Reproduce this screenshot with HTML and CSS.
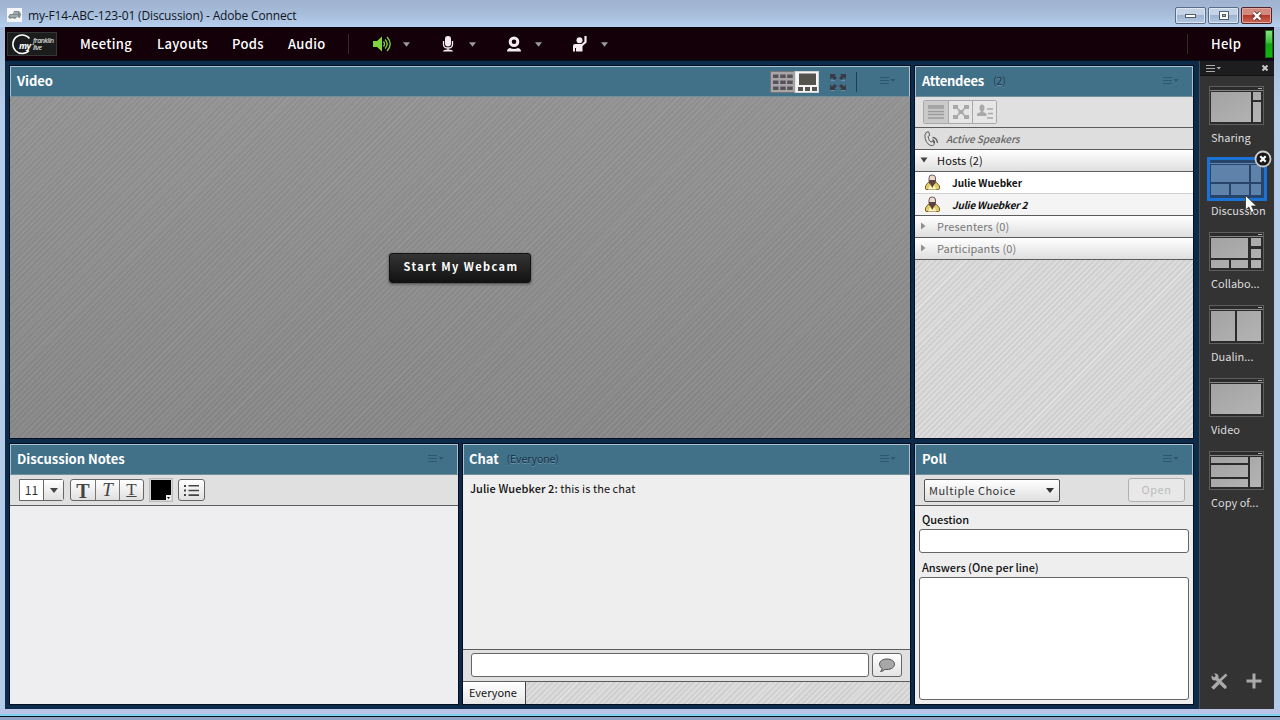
FILE: index.html
```html
<!DOCTYPE html>
<html lang="en">
<head>
    <meta charset="UTF-8">
    <meta name="viewport" content="width=device-width, initial-scale=1.0">
    <title>my-F14-ABC-123-01 (Discussion) - Adobe Connect</title>
    <link rel="stylesheet" href="styles.css">
</head>
<body>
    <!-- Shared icons -->
    <svg class="defs" width="0" height="0">
        <symbol id="pod-menu" viewBox="0 0 16 10">
            <path d="M0 1.500h9M0 4.500h9M0 7.500h9" stroke="currentColor" fill="none"/>
            <path d="M10.500 3h5l-2.500 3z" fill="currentColor"/>
        </symbol>
        <symbol id="caret" viewBox="0 0 8 5">
            <path d="M0 0h8L4 5z" fill="currentColor"/>
        </symbol>
        <symbol id="host" viewBox="0 0 17 17">
            <path d="M1.500 15v-3l2.500-3.500h8.500l3 3.500v3l-1 .5h-12.500z" fill="#e3cc6a" stroke="#7d6426"/>
            <path d="M4 15.500l2-4 2.300 2 2.200-2 2 4z" fill="#fff6c4"/>
            <path d="M6 8.500l2.300 5.500 2.200-5.500z" fill="#4f3433"/>
            <rect x="5" y="1" width="6.500" height="9" rx="3" fill="#ecdcd2" stroke="#6b5a56"/>
            <path d="M5 6h6.500v3l-2 2h-2.500l-2-2z" fill="#5e4240"/>
        </symbol>
        <symbol id="frame" viewBox="0 0 56 40">
            <rect x=".5" y=".5" width="54" height="38" fill="#2b2b2b" stroke="#5e5e5e"/>
            <path d="M1 4.500h53" stroke="#858585"/>
            <path d="M49 2.500h4" stroke="#aaa"/>
        </symbol>
        <linearGradient id="block" x1="0" y1="0" x2="1" y2="1">
            <stop offset="0" stop-color="#a2a2a2"/>
            <stop offset="1" stop-color="#b4b4b4"/>
        </linearGradient>
    </svg>

    <div class="window">
        <div class="titlebar">
            <svg class="app-icon" width="15" height="14" viewBox="0 0 15 14">
                <rect width="15" height="14" fill="#f4f6f8"/>
                <path d="M1 9l2-3h3l1-3h5l2 3-1 4-3-1-2 2-3-1-2 1z" fill="#7e8a8b"/>
                <path d="M3 8h8M7 5h4" stroke="#c5cccb"/>
            </svg>
            <span class="window-title">my-F14-ABC-123-01 (Discussion) - Adobe Connect</span>
            <div class="window-btns">
                <div class="win-btn">
                    <svg width="12" height="6" viewBox="0 0 12 6"><rect x=".5" y="1.500" width="10" height="3" fill="#fff" stroke="#505c70"/></svg>
                </div>
                <div class="win-btn">
                    <svg width="12" height="10" viewBox="0 0 12 10"><rect x="1.500" y=".5" width="9" height="8" fill="#fff" stroke="#505c70"/><rect x="4.500" y="3.500" width="3" height="2" fill="#9fb3cf" stroke="#505c70"/></svg>
                </div>
                <div class="win-btn close">
                    <svg width="12" height="10" viewBox="0 0 12 10"><path d="M2.500 1.500l7 7M9.500 1.500l-7 7" stroke="#6c3330" stroke-width="4"/><path d="M2.500 1.500l7 7M9.500 1.500l-7 7" stroke="#fff" stroke-width="2.400"/></svg>
                </div>
            </div>
        </div>

        <div class="app">
            <div class="menubar">
                <div class="logo">
                    <svg class="logo-ring" width="22" height="22" viewBox="0 0 22 22"><path d="M18.500 5.500A9.300 9.300 0 1 0 18 17.500" fill="none" stroke="#fff" stroke-width="1.500"/></svg>
                    <b class="logo-my">my</b>
                    <span class="logo-name">franklin<br>live</span>
                </div>
                <span class="menu-item meeting">Meeting</span>
                <span class="menu-item layouts">Layouts</span>
                <span class="menu-item pods-menu">Pods</span>
                <span class="menu-item audio">Audio</span>
                <div class="separator"></div>
                <div class="tools">
                    <div class="tool">
                        <svg width="20" height="18" viewBox="0 0 20 18">
                            <path d="M1 6h4l5-4.500v15L5 12H1z" fill="#7ed43c"/>
                            <path d="M11.500 6.500q2 2.500 0 5M13 4.500q4.500 4.500 0 9M15 2q6.500 7 0 14" fill="none" stroke="#7ed43c" stroke-width="1.300"/>
                        </svg>
                        <svg class="tool-caret" width="7" height="5"><use href="#caret"/></svg>
                    </div>
                    <div class="tool">
                        <svg width="20" height="18" viewBox="0 0 20 18">
                            <rect x="7" y="1" width="6" height="10.500" rx="3" fill="#f4ecef"/>
                            <path d="M5.500 6v3.500q0 3.500 4.500 3.500t4.500-3.500V6M10 13v2.500" fill="none" stroke="#f4ecef" stroke-width="1.300"/>
                            <path d="M5 16.500q0-2 5-2t5 2z" fill="#f4ecef"/>
                        </svg>
                        <svg class="tool-caret" width="7" height="5"><use href="#caret"/></svg>
                    </div>
                    <div class="tool">
                        <svg width="20" height="18" viewBox="0 0 20 18">
                            <circle cx="10" cy="6.800" r="3.800" fill="none" stroke="#f4ecef" stroke-width="3"/>
                            <path d="M3 16.500q0-3 3-3.500 4 2 8 0 3 .5 3 3.500z" fill="#f4ecef"/>
                        </svg>
                        <svg class="tool-caret" width="7" height="5"><use href="#caret"/></svg>
                    </div>
                    <div class="tool">
                        <svg width="20" height="18" viewBox="0 0 20 18">
                            <circle cx="9.500" cy="5.200" r="3" fill="#f4ecef"/>
                            <path d="M15.500 1v6l-4 3.500" fill="none" stroke="#f4ecef" stroke-width="2.200"/>
                            <path d="M3 16.500v-5.500q0-2 2-2h8.500l-1 2v5.500h-6.500v-3.500l-1 0v3.500z" fill="#f4ecef"/>
                        </svg>
                        <svg class="tool-caret" width="7" height="5"><use href="#caret"/></svg>
                    </div>
                </div>
                <div class="separator help-sep"></div>
                <span class="menu-item help">Help</span>
                <div class="signal"></div>
            </div>

            <div class="main">
                <div class="pods">
                    <div class="pod video">
                        <div class="pod-header">
                            <h2>Video</h2>
                            <svg class="view-icons" width="50" height="24" viewBox="0 0 50 24">
                                <rect x=".5" y="1.500" width="24" height="21" fill="#a9a4a6" stroke="#77747c"/>
                                <rect x="25" y="1.500" width="23.500" height="21" fill="#f5f5f5" stroke="#cfd3d8"/>
                                <path d="M3 4.500h5.500v3.500H3zm7.200 0h5.500v3.500h-5.500zm7 0h5.500v3.500h-5.500zM3 10.500h5.500v3.500H3zm7.200 0h5.500v3.500h-5.500zm7 0h5.500v3.500h-5.500zM3 16.500h5.500v3.500H3zm7.200 0h5.500v3.500h-5.500zm7 0h5.500v3.500h-5.500z" fill="#56525a"/>
                                <path d="M29 3.500h17v11.500H29zM28 17h5v4h-5zm7 0h5v4h-5zm7 0h5v4h-5z" fill="#55534f"/>
                            </svg>
                            <svg class="expand-icon" width="18" height="18" viewBox="0 0 18 18" fill="#3b3943">
                                <path d="M1 1h6L5.500 2.500 8 5 5.500 7 3 4.500 1 6.500zM17 1h-6l1.500 1.500L10 5l2.500 2L15 4.500l2 2zM1 17h6l-1.500-1.500L8 13l-2.500-2L3 13.500l-2-2zM17 17h-6l1.500-1.500L10 13l2.500-2 2.500 2.500 2-2z"/>
                                <path d="M2 7.500h4M12 7.500h4M2 17.500h4M12 17.500h4" stroke="#7d9cb0" stroke-width=".7"/>
                            </svg>
                            <div class="header-line"></div>
                            <svg class="pod-menu" width="16" height="10"><use href="#pod-menu"/></svg>
                        </div>
                        <div class="video-stage">
                            <button class="webcam-btn">Start My Webcam</button>
                        </div>
                    </div>

                    <div class="pod attendees">
                        <div class="pod-header">
                            <h2>Attendees</h2>
                            <span class="pod-note count">(2)</span>
                            <svg class="pod-menu" width="16" height="10"><use href="#pod-menu"/></svg>
                        </div>
                        <div class="pod-toolbar">
                            <div class="view-toggle">
                                <div class="toggle-btn active">
                                    <svg width="18" height="16" viewBox="0 0 18 16"><path d="M1 1h16v4H1z" fill="#a5a5a5"/><path d="M1 7.500h16M1 10.500h16M1 14h16" stroke="#9b9b9b" stroke-width="1.500"/></svg>
                                </div>
                                <div class="toggle-btn">
                                    <svg width="18" height="16" viewBox="0 0 18 16" fill="#a9a9a9"><path d="M1 1h5v4H1zM12 1h5v4h-5zM1 11h5v4H1zM12 11h5v4h-5zM6.500 6h5v4h-5z"/><path d="M4 3l10 10M14 3L4 13" stroke="#a9a9a9" stroke-width="1.500"/></svg>
                                </div>
                                <div class="toggle-btn">
                                    <svg width="18" height="16" viewBox="0 0 18 16" fill="#a9a9a9"><path d="M3.500 4q0-3.500 2.500-3.500t2.500 3.500q0 2-1.200 3v1l3.200 1.500v2.500H1V9.500L4.700 8V7Q3.500 6 3.500 4z"/><path d="M11 5h6M12 9.500h5M11 14h6" stroke="#a9a9a9" stroke-width="1.600"/></svg>
                                </div>
                            </div>
                        </div>
                        <div class="speakers">
                            <svg width="16" height="16" viewBox="0 0 16 16" fill="none" stroke="#5c5c5c"><path d="M2 1.500l2.500-.8 1.300 3.500-1.800 1.300q.5 4 3 5.500l2-.8 1.500 3-2 1.500Q3 14.500 1.200 7.500.2 3.500 2 1.500z"/><path d="M8.500 9q1.800 0 2 3M8.500 6.500q4.500.2 5 5.500" stroke-width="1.300"/></svg>
                            <em>Active Speakers</em>
                        </div>
                        <div class="group open">
                            <svg class="arrow" width="8" height="6" viewBox="0 0 8 6"><path d="M.5.500h7L4 5.500z" fill="#444"/></svg>
                            Hosts (2)
                        </div>
                        <div class="attendee">
                            <svg width="17" height="17"><use href="#host"/></svg>
                            <b>Julie Wuebker</b>
                        </div>
                        <div class="attendee me">
                            <svg width="17" height="17"><use href="#host"/></svg>
                            <b>Julie Wuebker 2</b>
                        </div>
                        <div class="group presenters">
                            <svg class="arrow" width="8" height="8" viewBox="0 0 8 8"><path d="M1 .5v7l4.500-3.500z" fill="#8f8f8f"/></svg>
                            Presenters (0)
                        </div>
                        <div class="group participants">
                            <svg class="arrow" width="8" height="8" viewBox="0 0 8 8"><path d="M1 .5v7l4.500-3.500z" fill="#8f8f8f"/></svg>
                            Participants (0)
                        </div>
                        <div class="hatch"></div>
                    </div>

                    <div class="pod notes">
                        <div class="pod-header">
                            <h2>Discussion Notes</h2>
                            <svg class="pod-menu" width="16" height="10"><use href="#pod-menu"/></svg>
                        </div>
                        <div class="pod-toolbar notes-toolbar">
                            <div class="font-size">
                                <span>11</span>
                                <div class="drop"><svg width="8" height="5"><use href="#caret"/></svg></div>
                            </div>
                            <div class="format-btns">
                                <span class="bold">T</span>
                                <span class="italic">T</span>
                                <span class="underline">T</span>
                            </div>
                            <div class="color-picker">
                                <svg width="20" height="20" viewBox="0 0 20 20"><path d="M0 0h20v20H0z"/><path d="M15 15h5v5h-5z" fill="#eee"/><path d="M16 17h3l-1.500 2z"/></svg>
                            </div>
                            <div class="list-btn">
                                <svg width="16" height="13" viewBox="0 0 16 13"><path d="M0 1h2v2H0zM0 5.500h2v2H0zM0 10h2v2H0zM4.500 1H15v1.600H4.500zM4.500 5.700H15v1.600H4.500zM4.500 10.300H15v1.600H4.500z" fill="#444"/></svg>
                            </div>
                        </div>
                        <div class="notes-body"></div>
                    </div>

                    <div class="pod chat">
                        <div class="pod-header">
                            <h2>Chat</h2>
                            <span class="pod-note everyone">(Everyone)</span>
                            <svg class="pod-menu" width="16" height="10"><use href="#pod-menu"/></svg>
                        </div>
                        <div class="chat-log"><b>Julie Wuebker 2:</b> <span>this is the chat</span></div>
                        <div class="chat-entry">
                            <div class="text-field"></div>
                            <div class="send-btn">
                                <svg width="18" height="15" viewBox="0 0 18 15"><path d="M9 1c4.500 0 7.500 2.300 7.500 5.200s-3 5.300-7.500 5.300q-1.300 0-2-.2-1.500 2-4.500 2.200 1.500-1.300 1.600-3Q1.500 9 1.500 6.200C1.500 3.300 4.500 1 9 1z" fill="#a7a7a7" stroke="#505050"/></svg>
                            </div>
                        </div>
                        <div class="chat-tabs">
                            <div class="tab">Everyone</div>
                            <div class="hatch"></div>
                        </div>
                    </div>

                    <div class="pod poll">
                        <div class="pod-header">
                            <h2>Poll</h2>
                            <svg class="pod-menu" width="16" height="10"><use href="#pod-menu"/></svg>
                        </div>
                        <div class="pod-toolbar poll-toolbar">
                            <div class="select">
                                <span>Multiple Choice</span>
                                <svg width="8" height="5"><use href="#caret"/></svg>
                            </div>
                            <div class="open-btn">Open</div>
                        </div>
                        <div class="poll-body">
                            <label class="question-label">Question</label>
                            <div class="text-field question"></div>
                            <label class="answers-label">Answers (One per line)</label>
                            <div class="text-field answers"></div>
                        </div>
                    </div>
                </div>

                <div class="layout-bar">
                    <div class="layout-bar-header">
                        <svg width="16" height="9" viewBox="0 0 16 9"><path d="M0 1.500h9M0 4.500h9M0 7.500h9" stroke="#aaa"/><path d="M10.500 3h4.500l-2.200 2.500z" fill="#aaa"/></svg>
                        <svg width="8" height="8" viewBox="0 0 8 8"><path d="M1.500 1.500l5 5M6.500 1.500l-5 5" stroke="#c8c8c8" stroke-width="2"/></svg>
                    </div>
                    <div class="layout-list">
                        <div class="layout">
                            <svg width="56" height="40" viewBox="0 0 56 40"><use href="#frame"/><path d="M2 6h40v30H2zM44 6h8v8h-8zM44 16h8v20h-8z" fill="url(#block)"/></svg>
                            <span>Sharing</span>
                        </div>
                        <div class="layout selected">
                            <svg width="56" height="40" viewBox="0 0 56 40"><rect width="56" height="40" fill="#27456a"/><path d="M1 4.500h53" stroke="#6186af"/><path d="M2 6h38v17H2zM42 6h10v17H42zM2 25h18v11H2zM22 25h18v11H22zM42 25h10v11H42z" fill="#5f82aa"/></svg>
                            <span>Discussion</span>
                            <div class="remove-badge">
                                <svg width="18" height="18" viewBox="0 0 18 18"><circle cx="9" cy="9" r="7.500" fill="#191919" stroke="#ccc" stroke-width="1.800"/><path d="M6.300 6.300l5.400 5.400M11.700 6.300l-5.400 5.400" stroke="#fff" stroke-width="2.200"/></svg>
                            </div>
                            <div class="cursor">
                                <svg width="13" height="19" viewBox="0 0 13 19"><path d="M.5.500v14.500l3.300-3 2.500 5.500 2.700-1.200-2.400-5.300h4.900z" fill="#fff" stroke="#222" stroke-width=".7"/></svg>
                            </div>
                        </div>
                        <div class="layout">
                            <svg width="56" height="40" viewBox="0 0 56 40"><use href="#frame"/><path d="M2 6h37v20H2zM42 6h10v8H42zM42 17h10v9H42zM2 28h18v8H2zM22 28h17v8H22zM42 28h10v8H42z" fill="url(#block)"/></svg>
                            <span>Collabo...</span>
                        </div>
                        <div class="layout">
                            <svg width="56" height="40" viewBox="0 0 56 40"><use href="#frame"/><path d="M2 6h24v30H2zM28 6h24v30H28z" fill="url(#block)"/></svg>
                            <span>Dualin...</span>
                        </div>
                        <div class="layout">
                            <svg width="56" height="40" viewBox="0 0 56 40"><use href="#frame"/><path d="M2 6h50v30H2z" fill="url(#block)"/></svg>
                            <span>Video</span>
                        </div>
                        <div class="layout">
                            <svg width="56" height="40" viewBox="0 0 56 40"><use href="#frame"/><path d="M2 6h37v6H2zM2 14h37v12H2zM2 28h37v8H2zM41 6h11v30H41z" fill="url(#block)"/></svg>
                            <span>Copy of...</span>
                        </div>
                    </div>
                    <div class="layout-tools">
                        <svg width="17" height="17" viewBox="0 0 17 17"><path d="M4 4l10 10" stroke="#aaa" stroke-width="3.400" stroke-linecap="round"/><circle cx="4" cy="4" r="3.500" fill="#aaa"/><path d="M0 0l4 3.500" stroke="#333" stroke-width="2.600"/><path d="M15.500 1.500L9 7.500" stroke="#aaa" stroke-width="2.500"/><path d="M7.500 9.500l-6 6" stroke="#aaa" stroke-width="3.500"/></svg>
                        <svg width="16" height="16" viewBox="0 0 16 16"><path d="M8 .5v15M.5 8h15" stroke="#aaa" stroke-width="3"/></svg>
                    </div>
                </div>
            </div>
        </div>
        <div class="window-edge"></div>
    </div>
</body>
</html>
```
FILE: styles.css
```css
* {
    box-sizing: border-box;
}

body {
    margin: 0;
    font-family: "Noto Sans CJK SC", "Open Sans", sans-serif;
    font-size: 11px;
    color: #111;
    overflow: hidden;
}

svg {
    display: block;
    flex: none;
}

.defs {
    position: absolute;
}

.window {
    width: 1280px;
    height: 720px;
    display: flex;
    flex-direction: column;
    background: linear-gradient(#a3b9d5, #b5cdea 110px, #b4cbe8);
}

/* Title bar */
.titlebar {
    height: 27px;
    flex: none;
    display: flex;
    align-items: center;
    padding: 4px 8px 0 7px;
    background: linear-gradient(#9fb3d0, #a6bcd9 50%, #b6cfee);
}

.app-icon {
    margin-bottom: 2px;
}

.window-title {
    margin-left: 6px;
    font-family: "Open Sans", sans-serif;
    font-size: 12px;
    letter-spacing: -0.15px;
    line-height: 20px;
    color: #10151e;
    white-space: nowrap;
}

.window-btns {
    display: flex;
    gap: 2px;
    margin-left: auto;
}

.win-btn {
    width: 31px;
    height: 17px;
    border: 1px solid #5a6c87;
    border-radius: 2px;
    box-shadow: inset 0 0 0 1px #dde7f3;
    background: linear-gradient(#c4d3e6 50%, #9db3cf 50%, #b5c9e1);
    display: flex;
    align-items: center;
    justify-content: center;
}

.win-btn.close {
    border-color: #54232a;
    box-shadow: inset 0 0 0 1px #dda9a0;
    background: linear-gradient(#d28a7f 45%, #b33a2b 50%, #cb6854);
}

/* Menu bar */
.app {
    height: 682px;
    flex: none;
    margin: 0 6px 0 5px;
    display: flex;
    flex-direction: column;
    background: #0c2a4a;
}

.menubar {
    height: 33px;
    flex: none;
    display: flex;
    align-items: center;
    background: #130009;
    border-top: 1px solid #02020c;
    color: #fff;
}

.logo {
    width: 50px;
    height: 24px;
    margin-left: 2px;
    display: flex;
    align-items: center;
    background: #1b1d1c;
    border: 1px solid #343636;
    overflow: hidden;
}

.logo-ring {
    margin-left: 3px;
}

.logo-my {
    width: 12px;
    margin-left: -14px;
    font: italic bold 9px/11px "Open Sans", sans-serif;
    letter-spacing: -0.6px;
    padding-top: 3px;
}

.logo-name {
    margin-left: 2px;
    padding-bottom: 1px;
    font: italic 7px/7px "Open Sans", sans-serif;
    letter-spacing: -0.4px;
}

.menu-item {
    margin-bottom: 1px;
    font-size: 13px;
    font-weight: 500;
    line-height: 20px;
    letter-spacing: 0.3px;
    white-space: nowrap;
}

.meeting {
    width: 77px;
    margin-left: 23px;
}

.layouts {
    width: 75px;
}

.pods-menu {
    width: 56px;
}

.audio {
    width: 60px;
}

.separator {
    width: 1px;
    height: 20px;
    background: #362733;
}

.tools {
    display: flex;
    margin-left: 23px;
}

.tool {
    width: 66px;
    display: flex;
    align-items: center;
    gap: 11px;
}

.tool-caret {
    color: #9c9c9c;
}

.help-sep {
    margin-left: auto;
}

.help {
    margin-left: 23px;
    width: 54px;
}

.signal {
    width: 8px;
    height: 28px;
    margin-right: 1px;
    border: 1px solid #0b6a12;
    background: linear-gradient(#8ade86, #39bf37 45%, #0ea80d 50%, #0eb60e);
}

.main {
    flex: 1;
    display: flex;
    border-top: 1px solid #05101e;
}

/* Pods */
.pods {
    width: 1194px;
    flex: none;
    display: grid;
    grid-template-columns: 448px 447px 278px;
    grid-template-rows: 372px 260px;
    column-gap: 5px;
    row-gap: 6px;
    padding: 5px 0 0 5px;
}

.pod {
    display: flex;
    flex-direction: column;
    min-width: 0;
    background: #eeeeef;
    outline: 1px solid #040e20;
}

.video {
    grid-column: span 2;
}

.pod-header {
    height: 31px;
    flex: none;
    display: flex;
    align-items: center;
    padding: 0 13px 0 6px;
    background: #417189;
    border: 1px solid #a5c3d2;
    border-bottom-color: #728e9b;
}

.pod-header h2 {
    margin: 0 0 1px;
    font-size: 13px;
    font-weight: 700;
    line-height: 20px;
    letter-spacing: -0.05px;
    color: #fff;
    white-space: nowrap;
}

.attendees h2 {
    letter-spacing: -0.25px;
}

.notes h2 {
    letter-spacing: 0;
}

.chat .pod-header {
    padding-left: 5px;
}

.pod-note {
    margin: 0 0 1px 11px;
    font-size: 10.5px;
    line-height: 20px;
    letter-spacing: -0.05px;
    color: #132f47;
    text-shadow: 0 1px 0 #7497a9;
}

.count {
    margin-left: 9px;
}

.everyone {
    margin-left: 8px;
}

.pod-menu {
    margin: 0 0 1px auto;
    color: #2b5870;
}

.view-icons {
    margin-left: auto;
}

.expand-icon {
    margin-left: 9px;
}

.header-line {
    width: 1px;
    height: 20px;
    margin-left: 9px;
    background: #1b4156;
}

.header-line + .pod-menu {
    margin-left: 23px;
}

.video-stage {
    flex: 1;
    display: flex;
    align-items: center;
    justify-content: center;
    background:
        repeating-linear-gradient(135deg, transparent 0 13px, rgba(255, 255, 255, 0.03) 13px 14px, transparent 14px 23px),
        repeating-linear-gradient(135deg, rgba(255, 255, 255, 0.07) 0 2px, transparent 2px 4px),
        linear-gradient(#8f8f8f, #848484);
}

.webcam-btn {
    width: 142px;
    height: 30px;
    padding: 0 0 3px;
    border: 1px solid #111;
    border-radius: 3px;
    background: linear-gradient(#343434, #121212);
    box-shadow: 0 1px 3px #444;
    color: #fff;
    font-family: "Noto Sans CJK SC", sans-serif;
    font-size: 11px;
    font-weight: 700;
    letter-spacing: 1.4px;
    text-indent: 2px;
    white-space: nowrap;
}

.pod-toolbar {
    height: 31px;
    flex: none;
    display: flex;
    align-items: center;
    padding: 0 8px;
    background: #e0e0e0;
    border-bottom: 1px solid #5c5c5c;
}

.hatch {
    flex: 1;
    background:
        repeating-linear-gradient(135deg, transparent 0 13px, rgba(255, 255, 255, 0.2) 13px 14px, transparent 14px 23px),
        repeating-linear-gradient(135deg, #dcdcdc 0 2px, #d0d0d0 2px 4px);
}

/* Attendees */
.view-toggle {
    display: flex;
    border: 1px solid #a9a9a9;
    border-radius: 2px;
}

.toggle-btn {
    width: 24px;
    height: 22px;
    display: flex;
    align-items: center;
    justify-content: center;
    background: #e6e6e6;
}

.toggle-btn + .toggle-btn {
    border-left: 1px solid #a9a9a9;
}

.toggle-btn.active {
    background: #cacaca;
}

.speakers {
    height: 22px;
    display: flex;
    align-items: center;
    gap: 6px;
    padding-left: 9px;
    background: #dedede;
    border-bottom: 1px solid #5c5c5c;
    font-size: 10px;
    font-weight: 500;
    letter-spacing: -0.1px;
    color: #666;
}

.group {
    height: 22px;
    display: flex;
    align-items: center;
    gap: 9px;
    padding: 0 0 1px 5px;
    background: linear-gradient(#fff, #dfdfdf);
    border-bottom: 1px solid #5c5c5c;
    letter-spacing: 0.12px;
    color: #777;
}

.group.open {
    color: #111;
}

.attendee {
    height: 22px;
    display: flex;
    align-items: center;
    gap: 11px;
    padding-left: 9px;
    background: #fff;
    border-bottom: 1px solid #d0d0d0;
    font-size: 10px;
}

.attendee.me {
    background: #f5f4f5;
    border-bottom-color: #5c5c5c;
    font-style: italic;
    letter-spacing: -0.2px;
}

/* Discussion notes */
.notes-toolbar {
    padding-left: 9px;
}

.font-size {
    width: 45px;
    height: 22px;
    display: flex;
    border: 1px solid #666;
    border-radius: 0 3px 3px 0;
    background: #fff;
    font-size: 12px;
    line-height: 20px;
    color: #333;
}

.font-size span {
    flex: 1;
    text-align: center;
}

.drop {
    width: 20px;
    display: flex;
    align-items: center;
    justify-content: center;
    border-left: 1px solid #666;
    background: linear-gradient(#fff, #e0e0e0);
    color: #444;
}

.format-btns {
    display: flex;
    margin-left: 6px;
    border: 1px solid #666;
    border-radius: 3px;
    background: linear-gradient(#fff, #e0e0e0);
}

.format-btns span {
    width: 24px;
    height: 20px;
    text-align: center;
    font: 19px/20px "Liberation Serif", serif;
    color: #444;
}

.format-btns span + span {
    border-left: 1px solid #777;
}

.format-btns .bold {
    font-weight: 700;
    font-size: 20px;
    line-height: 22px;
}

.format-btns .italic {
    font-style: italic;
}

.format-btns .underline {
    font-size: 17px;
    line-height: 19px;
    text-decoration: underline;
}

.color-picker {
    margin-left: 6px;
    border: 1px solid #d6d6d6;
    outline: 1px solid #bbb;
}

.list-btn {
    width: 27px;
    height: 22px;
    margin-left: 6px;
    display: flex;
    align-items: center;
    justify-content: center;
    border: 1px solid #666;
    border-radius: 3px;
    background: linear-gradient(#fff, #e0e0e0);
}

.notes-body {
    flex: 1;
    background: #eeeef0;
}

/* Chat */
.chat-log {
    flex: 1;
    padding: 3px 7px;
    line-height: 20px;
    letter-spacing: 0.07px;
    background: #eee;
}

.chat-log b {
    font-weight: 500;
}

.chat-entry {
    height: 33px;
    display: flex;
    align-items: center;
    padding: 0 8px 1px;
    gap: 3px;
    background: #e0e0e0;
    border-top: 1px solid #5c5c5c;
    border-bottom: 1px solid #5c5c5c;
}

.text-field {
    background: #fff;
    border: 1px solid #666;
    border-radius: 3px;
}

.chat-entry .text-field {
    flex: 1;
    height: 24px;
}

.send-btn {
    width: 30px;
    height: 24px;
    display: flex;
    align-items: center;
    justify-content: center;
    border: 1px solid #666;
    border-radius: 3px;
    background: linear-gradient(#fff, #e4e4e4);
}

.chat-tabs {
    height: 22px;
    display: flex;
}

.tab {
    width: 63px;
    padding-left: 6px;
    border-right: 1px solid #444;
    background: linear-gradient(#fff, #e6e6e6);
    line-height: 21px;
}

/* Poll */
.poll-toolbar {
    justify-content: space-between;
    padding-left: 9px;
}

.select {
    width: 136px;
    height: 23px;
    display: flex;
    align-items: center;
    justify-content: space-between;
    padding: 0 5px 0 4px;
    border: 1px solid #555;
    border-radius: 2px;
    background: linear-gradient(#fff, #dfdfdf);
    letter-spacing: 0.5px;
    color: #333;
}

.open-btn {
    width: 57px;
    height: 24px;
    border: 1px solid #b0b0b0;
    border-radius: 3px;
    background: #e8e8e8;
    text-align: center;
    line-height: 21px;
    letter-spacing: 0.5px;
    color: #bcbcbc;
}

.poll-body {
    flex: 1;
    display: flex;
    flex-direction: column;
    padding: 4px;
}

.poll-body label {
    height: 19px;
    padding-left: 3px;
    line-height: 18px;
    font-weight: 500;
    letter-spacing: -0.05px;
}

.question {
    height: 24px;
    margin-bottom: 5px;
}

.answers {
    flex: 1;
}

/* Layout bar */
.layout-bar {
    flex: 1;
    display: flex;
    flex-direction: column;
    background: #333;
    border-left: 1px solid #4c4c4c;
}

.layout-bar-header {
    height: 15px;
    flex: none;
    display: flex;
    align-items: center;
    justify-content: space-between;
    padding: 0 5px 0 6px;
    background: #1d1d1f;
    border-bottom: 1px solid #111;
}

.layout-list {
    flex: 1;
    padding: 10px 0 0 9px;
}

.layout {
    position: relative;
    height: 73px;
    color: #ddd;
}

.layout span {
    display: block;
    padding: 1px 0 0 2px;
    line-height: 20px;
    letter-spacing: 0;
    white-space: nowrap;
}

.layout.selected > svg {
    outline: 3px solid #1a72d4;
    outline-offset: -1px;
}

.remove-badge {
    position: absolute;
    left: 45px;
    top: -9px;
}

.cursor {
    position: absolute;
    left: 36px;
    top: 36px;
}

.layout-tools {
    display: flex;
    gap: 18px;
    padding: 0 0 19px 11px;
}

/* Bottom edge of the window frame */
.window-edge {
    flex: 1;
    background: linear-gradient(#b9c4e6 0 5px, #7fd3ec 5px 7px, #08121f 7px 8px, #8fa3c4 8px);
}
```
